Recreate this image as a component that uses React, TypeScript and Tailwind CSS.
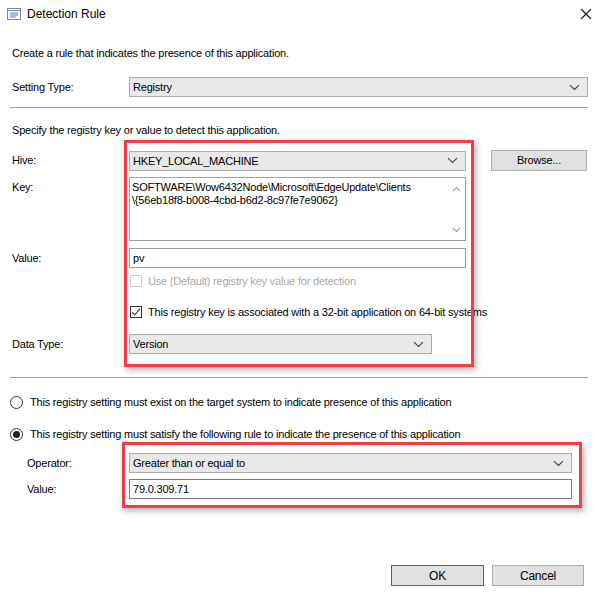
import React from "react";

const font = { fontFamily: '"Liberation Sans", Arial, sans-serif' };

const Chevron = () => (
  <svg width="11" height="7" viewBox="0 0 11 7">
    <path d="M1 1.2l4.5 4.3 4.5-4.3" fill="none" stroke="#444" strokeWidth="1.1" />
  </svg>
);

const Select = ({ value, w }: { value: string; w: string }) => (
  <div className={`flex items-center justify-between h-[20px] border border-[#adadad] bg-[#e9e9e9] pl-[3px] pr-[7px] ${w}`}>
    <span className="leading-[18px]">{value}</span>
    <Chevron />
  </div>
);

const Label = ({ children, w = "w-[117px]" }: { children: React.ReactNode; w?: string }) => (
  <div className={`${w} shrink-0`}>{children}</div>
);

const Check = ({ checked, disabled }: { checked?: boolean; disabled?: boolean }) => (
  <div
    className={`w-[12px] h-[12px] border flex items-center justify-center bg-white ${
      disabled ? "border-[#cccccc]" : "border-[#333333]"
    }`}
  >
    {checked && (
      <svg width="10" height="10" viewBox="0 0 10 10">
        <path d="M1.2 5.2l2.6 2.6 5-6" fill="none" stroke="#222" strokeWidth="1.1" />
      </svg>
    )}
  </div>
);

const Radio = ({ checked }: { checked?: boolean }) => (
  <div className="w-[13px] h-[13px] rounded-full border border-[#333333] flex items-center justify-center bg-white">
    {checked && <div className="w-[7px] h-[7px] rounded-full bg-[#222222]" />}
  </div>
);

export default function App() {
  return (
    <div
      className="relative w-[600px] h-[594px] bg-white text-[11px] tracking-[-0.2px] text-black overflow-hidden"
      style={font}
    >
      {/* title bar */}
      <div className="flex items-center h-[28px] pl-[7px] pr-[8px]">
        <svg width="14" height="14" viewBox="0 0 14 14">
          <rect x="0.5" y="1.5" width="13" height="11" fill="#fff" stroke="#7c8aa3" />
          <line x1="1" y1="3.5" x2="13" y2="3.5" stroke="#7c8aa3" />
          <line x1="3" y1="6" x2="11" y2="6" stroke="#3b7ddd" />
          <line x1="3" y1="8" x2="11" y2="8" stroke="#3b7ddd" />
          <line x1="3" y1="10" x2="9" y2="10" stroke="#3b7ddd" />
        </svg>
        <span className="ml-[6px] text-[12px] tracking-normal">Detection Rule</span>
        <div className="flex-1" />
        <svg width="12" height="12" viewBox="0 0 12 12">
          <path d="M1 1l10 10M11 1L1 11" stroke="#111" strokeWidth="1.1" />
        </svg>
      </div>

      <div className="pl-[12px]">
        <div className="mt-[17px] h-[16px] leading-[16px]">Create a rule that indicates the presence of this application.</div>

        <div className="mt-[16px] flex items-center">
          <Label>Setting Type:</Label>
          <Select value="Registry" w="w-[459px]" />
        </div>

        <div className="mt-[10px] ml-[-2px] w-[578px] h-px bg-[#a0a0a0]" />

        <div className="mt-[14px] h-[16px] leading-[16px]">Specify the registry key or value to detect this application.</div>

        <div className="mt-[12px] flex items-center">
          <Label>Hive:</Label>
          <Select value="HKEY_LOCAL_MACHINE" w="w-[337px]" />
          <div className="ml-[25px] w-[96px] h-[21px] border border-[#adadad] bg-[#e1e1e1] flex items-center justify-center">
            Browse...
          </div>
        </div>

        <div className="mt-[6px] flex items-start">
          <Label>
            <div className="pt-[2px] leading-[16px]">Key:</div>
          </Label>
          <div className="relative w-[337px] h-[64px] border border-[#a0a0a0] bg-white pl-[2px] pt-[3px] leading-[13px]">
            <div>SOFTWARE\Wow6432Node\Microsoft\EdgeUpdate\Clients</div>
            <div>\{"{"}56eb18f8-b008-4cbd-b6d2-8c97fe7e9062{"}"}</div>
            <div className="absolute right-[4px] top-[8px]">
              <svg width="9" height="6" viewBox="0 0 9 6">
                <path d="M1 5l3.5-3.5L8 5" fill="none" stroke="#9a9a9a" strokeWidth="1.1" />
              </svg>
            </div>
            <div className="absolute right-[4px] bottom-[7px]">
              <svg width="9" height="6" viewBox="0 0 9 6">
                <path d="M1 1l3.5 3.5L8 1" fill="none" stroke="#9a9a9a" strokeWidth="1.1" />
              </svg>
            </div>
          </div>
        </div>

        <div className="mt-[7px] flex items-center">
          <Label>Value:</Label>
          <div className="w-[337px] h-[20px] border border-[#a0a0a0] bg-white pl-[3px] leading-[18px]">pv</div>
        </div>

        <div className="mt-[5px] flex items-center h-[16px]">
          <Label w="w-[118px]"> </Label>
          <Check disabled />
          <span className="ml-[6px] text-[#a8a8a8]">Use (Default) registry key value for detection</span>
        </div>

        <div className="mt-[15px] flex items-center h-[16px]">
          <Label w="w-[118px]"> </Label>
          <Check checked />
          <span className="ml-[6px]">This registry key is associated with a 32-bit application on 64-bit systems</span>
        </div>

        <div className="mt-[14px] flex items-center">
          <Label>Data Type:</Label>
          <Select value="Version" w="w-[303px]" />
        </div>

        <div className="mt-[23px] ml-[-2px] w-[578px] h-px bg-[#a0a0a0]" />

        <div className="mt-[16px] ml-[-2px] flex items-center h-[16px]">
          <Radio />
          <span className="ml-[7px]">This registry setting must exist on the target system to indicate presence of this application</span>
        </div>

        <div className="mt-[16px] ml-[-2px] flex items-center h-[16px]">
          <Radio checked />
          <span className="ml-[7px]">This registry setting must satisfy the following rule to indicate the presence of this application</span>
        </div>

        <div className="mt-[11px] flex items-center">
          <Label>
            <span className="pl-[15px]">Operator:</span>
          </Label>
          <Select value="Greater than or equal to" w="w-[443px]" />
        </div>

        <div className="mt-[6px] flex items-center">
          <Label>
            <span className="pl-[15px]">Value:</span>
          </Label>
          <div className="w-[443px] h-[20px] border border-[#7a7a7a] bg-white pl-[3px] leading-[18px]">79.0.309.71</div>
        </div>

        <div className="mt-[66px] flex justify-end pr-[16px] gap-[8px]">
          <div className="w-[93px] h-[21px] border border-[#0078d7] bg-[#e1e1e1] flex items-center justify-center text-[12px]">OK</div>
          <div className="w-[92px] h-[21px] border border-[#adadad] bg-[#e1e1e1] flex items-center justify-center text-[12px]">Cancel</div>
        </div>
      </div>

      {/* red annotation boxes */}
      <div className="absolute left-[124px] top-[140px] w-[350px] h-[227px] border-[3px] border-[#ee3f46] shadow-[2px_3px_6px_rgba(0,0,0,0.3)] pointer-events-none" />
      <div className="absolute left-[122px] top-[442px] w-[460px] h-[66px] border-[3px] border-[#ee3f46] shadow-[2px_3px_6px_rgba(0,0,0,0.3)] pointer-events-none" />
    </div>
  );
}
